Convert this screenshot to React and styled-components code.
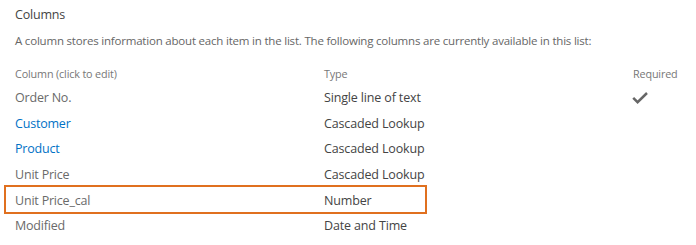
import React from 'react'
import styled, { createGlobalStyle } from 'styled-components'

const GlobalStyle = createGlobalStyle`
  html, body {
    margin: 0;
    padding: 0;
    background: #ffffff;
  }
  body {
    font-family: 'Open Sans', 'Noto Sans', sans-serif;
    -webkit-font-smoothing: antialiased;
  }
`

const Page = styled.div`
  width: 696px;
  height: 245px;
  padding: 6px 0 0 15px;
  box-sizing: border-box;
  color: #444444;
  overflow: hidden;
`

const Title = styled.h2`
  margin: 0;
  font-size: 12.5px;
  font-weight: 400;
  line-height: 18px;
  color: #444444;
  letter-spacing: -0.2px;
`

const Description = styled.p`
  margin: 9px 0 0;
  font-size: 11.5px;
  line-height: 16px;
  color: #666666;
  letter-spacing: -0.2px;
`

const Table = styled.div`
  margin-top: 12px;
  display: flex;
  flex-direction: column;
`

const Row = styled.div`
  position: relative;
  display: grid;
  grid-template-columns: 309px 309px 60px;
  align-items: center;
  height: ${props => (props.$head ? '24px' : '25.6px')};
`

const Highlight = styled.div`
  position: absolute;
  left: -11px;
  top: -2px;
  width: 423px;
  height: 29px;
  border: 2px solid #e0701f;
  box-sizing: border-box;
  pointer-events: none;
`

const HeadCell = styled.span`
  font-size: 10.8px;
  color: #777777;
  letter-spacing: -0.15px;
`

const NameCell = styled.span`
  font-size: 12.5px;
  color: ${props => (props.$link ? '#0072c6' : '#6a6a6a')};
  letter-spacing: -0.2px;
`

const TypeCell = styled.span`
  font-size: 12.5px;
  color: #444444;
  letter-spacing: -0.15px;
  white-space: nowrap;
`

const Check = styled.svg`
  width: 16px;
  height: 12px;
  display: block;
  margin-left: -1px;
`

const columns = [
  { name: 'Order No.', type: 'Single line of text', required: true },
  { name: 'Customer', type: 'Cascaded Lookup', link: true },
  { name: 'Product', type: 'Cascaded Lookup', link: true },
  { name: 'Unit Price', type: 'Cascaded Lookup' },
  { name: 'Unit Price_cal', type: 'Number', boxed: true },
  { name: 'Modified', type: 'Date and Time' },
]

function App() {
  return (
    <>
      <GlobalStyle />
      <Page>
        <Title>Columns</Title>
        <Description>
          A column stores information about each item in the list. The following columns are currently available in this list:
        </Description>
        <Table>
          <Row $head>
            <HeadCell>Column (click to edit)</HeadCell>
            <HeadCell>Type</HeadCell>
            <HeadCell>Required</HeadCell>
          </Row>
          {columns.map((col) => (
            <Row key={col.name}>
              <NameCell $link={col.link}>{col.name}</NameCell>
              <TypeCell>{col.type}</TypeCell>
              <span>
                {col.required && (
                  <Check viewBox="0 0 16 12">
                    <path d="M1.2 5.8 L5.6 10.2 L15 1" fill="none" stroke="#666666" strokeWidth="2.5" />
                  </Check>
                )}
              </span>
              {col.boxed && <Highlight />}
            </Row>
          ))}
        </Table>
      </Page>
    </>
  )
}

export default App
